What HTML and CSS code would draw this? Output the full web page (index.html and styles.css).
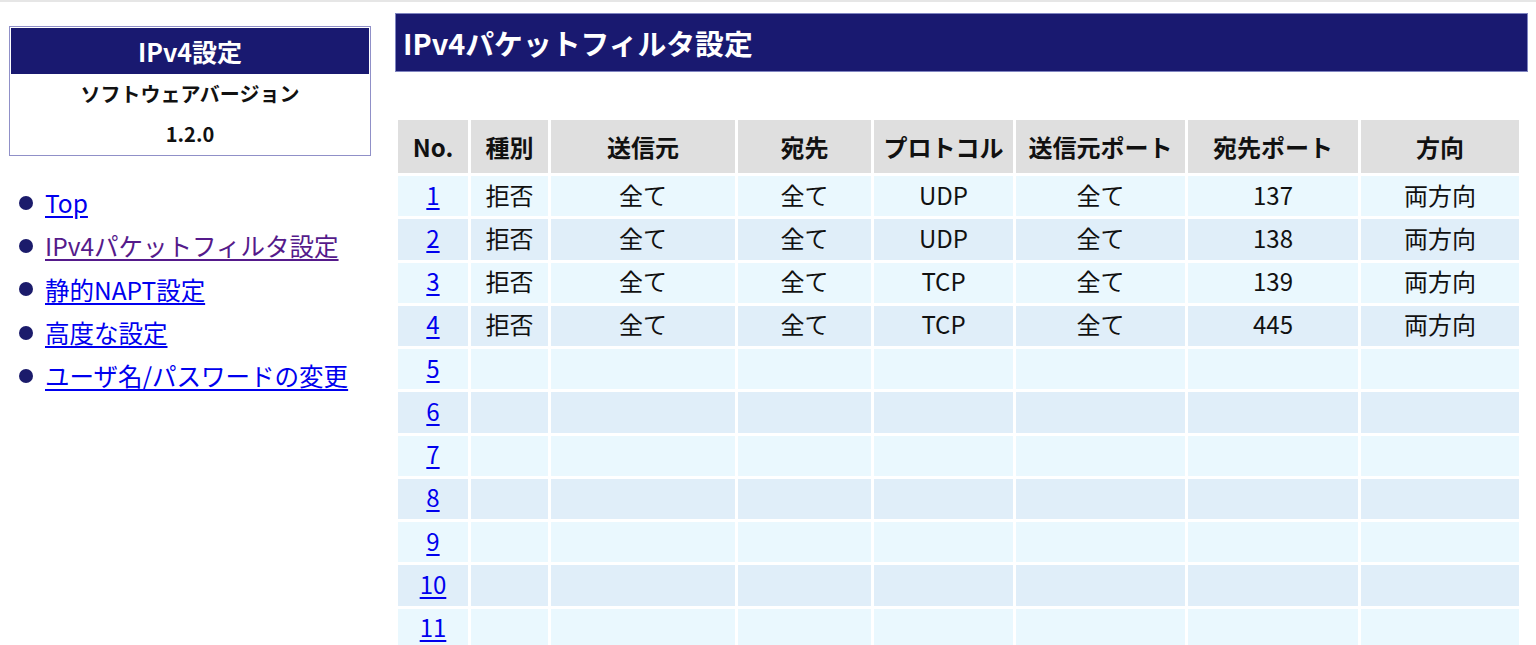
FILE: index.html
```html
<!DOCTYPE html>
<html lang="ja">
<head>
<meta charset="utf-8">
<title>IPv4パケットフィルタ設定</title>
<link rel="stylesheet" href="styles.css">
</head>
<body>
<div class="page">
  <aside class="side">
    <div class="side-box">
      <div class="side-head">IPv4設定</div>
      <div class="side-row">ソフトウェアバージョン</div>
      <div class="side-row">1.2.0</div>
    </div>
    <ul class="nav">
      <li><a href="#">Top</a></li>
      <li><a href="#" class="visited">IPv4パケットフィルタ設定</a></li>
      <li><a href="#">静的NAPT設定</a></li>
      <li><a href="#">高度な設定</a></li>
      <li><a href="#">ユーザ名/パスワードの変更</a></li>
    </ul>
  </aside>
  <main class="main">
    <h1 class="title">IPv4パケットフィルタ設定</h1>
    <table class="filter">
      <colgroup>
        <col class="c-no"><col class="c-kind"><col class="c-src"><col class="c-dst"><col class="c-proto"><col class="c-sport"><col class="c-dport"><col class="c-dir">
      </colgroup>
      <thead>
        <tr><th>No.</th><th>種別</th><th>送信元</th><th>宛先</th><th>プロトコル</th><th>送信元ポート</th><th>宛先ポート</th><th>方向</th></tr>
      </thead>
      <tbody>
        <tr><td><a href="#">1</a></td><td>拒否</td><td>全て</td><td>全て</td><td>UDP</td><td>全て</td><td>137</td><td>両方向</td></tr>
        <tr><td><a href="#">2</a></td><td>拒否</td><td>全て</td><td>全て</td><td>UDP</td><td>全て</td><td>138</td><td>両方向</td></tr>
        <tr><td><a href="#">3</a></td><td>拒否</td><td>全て</td><td>全て</td><td>TCP</td><td>全て</td><td>139</td><td>両方向</td></tr>
        <tr><td><a href="#">4</a></td><td>拒否</td><td>全て</td><td>全て</td><td>TCP</td><td>全て</td><td>445</td><td>両方向</td></tr>
        <tr><td><a href="#">5</a></td><td></td><td></td><td></td><td></td><td></td><td></td><td></td></tr>
        <tr><td><a href="#">6</a></td><td></td><td></td><td></td><td></td><td></td><td></td><td></td></tr>
        <tr><td><a href="#">7</a></td><td></td><td></td><td></td><td></td><td></td><td></td><td></td></tr>
        <tr><td><a href="#">8</a></td><td></td><td></td><td></td><td></td><td></td><td></td><td></td></tr>
        <tr><td><a href="#">9</a></td><td></td><td></td><td></td><td></td><td></td><td></td><td></td></tr>
        <tr><td><a href="#">10</a></td><td></td><td></td><td></td><td></td><td></td><td></td><td></td></tr>
        <tr><td><a href="#">11</a></td><td></td><td></td><td></td><td></td><td></td><td></td><td></td></tr>
      </tbody>
    </table>
  </main>
</div>
</body>
</html>
```

FILE: styles.css
```css
html, body {
  margin: 0;
  padding: 0;
  background: #ffffff;
}
body {
  border-top: 2px solid #e6e6e6;
  font-family: "Noto Sans CJK JP", "Noto Sans", sans-serif;
  color: #111111;
}
.page {
  display: flex;
  align-items: flex-start;
}
.side {
  width: 362px;
  margin-left: 9px;
  margin-top: 24px;
  flex: none;
}
.side-box {
  border: 1px solid #9090c8;
  padding: 1px;
}
.side-head {
  height: 46px;
  background: #191970;
  color: #ffffff;
  font-weight: bold;
  font-size: 25px;
  display: flex;
  align-items: center;
  justify-content: center;
}
.side-row {
  height: 39px;
  font-weight: bold;
  font-size: 20px;
  display: flex;
  align-items: center;
  justify-content: center;
}
.side-row:last-child {
  height: 41px;
}
.nav {
  list-style: none;
  margin: 25px 0 0 0;
  padding: 0;
}
.nav li {
  display: flex;
  align-items: center;
  height: 43.3px;
  font-size: 24.5px;
}
.nav li::before {
  content: "";
  width: 14px;
  height: 14px;
  border-radius: 50%;
  background: #1b1b6b;
  margin-left: 10px;
  margin-right: 12px;
  flex: none;
}
.nav a {
  color: #0000ee;
  text-decoration: underline;
  text-underline-offset: 3px;
}
.nav a.visited {
  color: #551a8b;
}
.main {
  margin-left: 24px;
  margin-top: 11px;
  flex: none;
}
.title {
  width: 1124px;
  height: 57px;
  margin: 0;
  background: #191970;
  border: 1px solid #7f84c0;
  color: #ffffff;
  font-size: 28.8px;
  font-weight: bold;
  display: flex;
  align-items: center;
  padding-left: 7px;
  box-sizing: content-box;
}
.filter {
  margin-top: 45px;
  border-collapse: separate;
  border-spacing: 3px;
  table-layout: fixed;
  width: 1127px;
  font-size: 24px;
}
.c-no { width: 70px; }
.c-kind { width: 77px; }
.c-src { width: 184px; }
.c-dst { width: 133px; }
.c-proto { width: 139px; }
.c-sport { width: 169px; }
.c-dport { width: 170px; }
.c-dir { width: 158px; }
.filter th {
  background: #dfdfdf;
  height: 53px;
  padding: 0;
  font-weight: bold;
  text-align: center;
  white-space: nowrap;
  overflow: hidden;
}
.filter td {
  height: 40.25px;
  padding: 0 0 3px 0;
  line-height: 30px;
  box-sizing: border-box;
  text-align: center;
  white-space: nowrap;
  background: #eaf8fe;
}
.filter tbody tr:nth-child(even) td {
  background: #e0eef9;
}
.filter td a {
  color: #0000ee;
  text-decoration: underline;
  text-underline-offset: 3px;
}
```
